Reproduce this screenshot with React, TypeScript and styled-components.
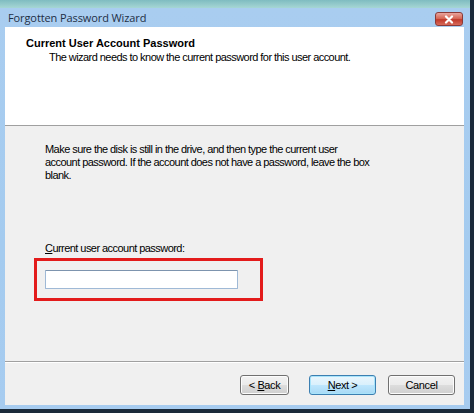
import React from "react";
import styled, { createGlobalStyle } from "styled-components";

const Global = createGlobalStyle`
  html, body { margin: 0; padding: 0; background: #1b2a3a; }
  body { font-family: "Liberation Sans", Arial, sans-serif; }
  * { box-sizing: border-box; }
`;

const Screen = styled.div`
  width: 474px;
  height: 413px;
  display: flex;
  flex-direction: column;
  background: #1b2a3a;
  overflow: hidden;
`;

const TopStrip = styled.div`
  height: 8px;
  background: linear-gradient(#7fbcc0, #a6d6d4);
  margin-right: 4px;
`;

const Window = styled.div`
  width: 470px;
  height: 401px;
  display: flex;
  flex-direction: column;
  background: linear-gradient(#a9cdf0, #a4cbef 60%, #a7ccf0);
  padding: 0 6px 4px 5px;
`;

const TitleBar = styled.div`
  height: 19px;
  display: flex;
  align-items: center;
  justify-content: space-between;
  padding-left: 3px;
  padding-right: 1px;
`;

const TitleText = styled.span`
  font-family: "Open Sans", "Liberation Sans", sans-serif;
  font-size: 11px;
  letter-spacing: -0.1px;
  color: #1e2f45;
`;

const CloseButton = styled.div`
  width: 28px;
  height: 14px;
  border-radius: 3px;
  border: 1px solid #8a3a38;
  background: linear-gradient(#e8a59e, #d4614f 50%, #c0392b 55%, #d86a5a);
  display: flex;
  align-items: center;
  justify-content: center;
  margin-top: 3px;
`;

const Client = styled.div`
  flex: 1;
  display: flex;
  flex-direction: column;
  background: #f0f0f0;
`;

const Header = styled.div`
  height: 99px;
  background: #ffffff;
  border-bottom: 1px solid #a0a0a0;
  padding: 10px 0 0 21px;
`;

const HeaderTitle = styled.div`
  font-size: 11px;
  font-weight: bold;
  color: #000;
  line-height: 13px;
`;

const Text = styled.div`
  font-size: 11px;
  line-height: 13px;
  letter-spacing: -0.55px;
  color: #000;
  u { text-decoration: underline; }
`;

const HeaderSub = styled(Text)`
  margin-left: 23px;
  margin-top: 1px;
`;

const Body = styled.div`
  flex: 1;
  display: flex;
  flex-direction: column;
  padding: 17px 0 0 40px;
  border-bottom: 1px solid #a0a0a0;
  box-shadow: 0 1px 0 #ffffff;
`;

const Paragraph = styled(Text)`
  width: 380px;
`;

const FieldLabel = styled(Text)`
  margin-top: 60px;
`;

const Highlight = styled.div`
  margin-left: -11px;
  margin-top: 3px;
  width: 229px;
  height: 43px;
  border: 3px solid #e31b1b;
  padding: 9px 0 0 8px;
`;

const Input = styled.input`
  width: 193px;
  height: 19px;
  border: 1px solid #9fb9d6;
  border-top-color: #7d94ae;
  background: #fff;
  border-radius: 1px;
  outline: none;
`;

const Footer = styled.div`
  height: 43px;
  display: flex;
  justify-content: flex-end;
  align-items: flex-start;
  padding: 13px 9px 0 0;
`;

const Button = styled.div<{ $w: number; $ml: number; $default?: boolean }>`
  width: ${(p) => p.$w}px;
  height: 20px;
  margin-left: ${(p) => p.$ml}px;
  border: 1px solid ${(p) => (p.$default ? "#3c7fb1" : "#707070")};
  border-radius: 3px;
  background: ${(p) =>
    p.$default
      ? "linear-gradient(#eaf6fd 0%, #d9f0fc 50%, #bee6fd 51%, #a7d9f5 100%)"
      : "linear-gradient(#f2f2f2 0%, #ebebeb 50%, #dddddd 51%, #cfcfcf 100%)"};
  box-shadow: inset 0 0 0 1px ${(p) => (p.$default ? "#a8e4fb" : "#fcfcfc")};
  display: flex;
  align-items: center;
  justify-content: center;
  font-size: 11px;
  letter-spacing: -0.4px;
  color: #000;
  u { text-decoration: underline; }
`;

export default function App() {
  return (
    <Screen>
      <Global />
      <TopStrip />
      <Window>
        <TitleBar>
          <TitleText>Forgotten Password Wizard</TitleText>
          <CloseButton>
            <svg width="10" height="9" viewBox="0 0 10 9">
              <path d="M2 1.5 L8 7.5 M8 1.5 L2 7.5" stroke="#ffffff" strokeWidth="2.2" strokeLinecap="round" />
            </svg>
          </CloseButton>
        </TitleBar>
        <Client>
          <Header>
            <HeaderTitle>Current User Account Password</HeaderTitle>
            <HeaderSub>The wizard needs to know the current password for this user account.</HeaderSub>
          </Header>
          <Body>
            <Paragraph>
              Make sure the disk is still in the drive, and then type the current user
              <br />
              account password. If the account does not have a password, leave the box
              <br />
              blank.
            </Paragraph>
            <FieldLabel>
              <u>C</u>urrent user account password:
            </FieldLabel>
            <Highlight>
              <Input type="password" />
            </Highlight>
          </Body>
          <Footer>
            <Button $w={49} $ml={0}>
              &lt;&nbsp;<u>B</u>ack
            </Button>
            <Button $w={67} $ml={20} $default>
              <u>N</u>ext &gt;
            </Button>
            <Button $w={67} $ml={12}>
              Cancel
            </Button>
          </Footer>
        </Client>
      </Window>
    </Screen>
  );
}
